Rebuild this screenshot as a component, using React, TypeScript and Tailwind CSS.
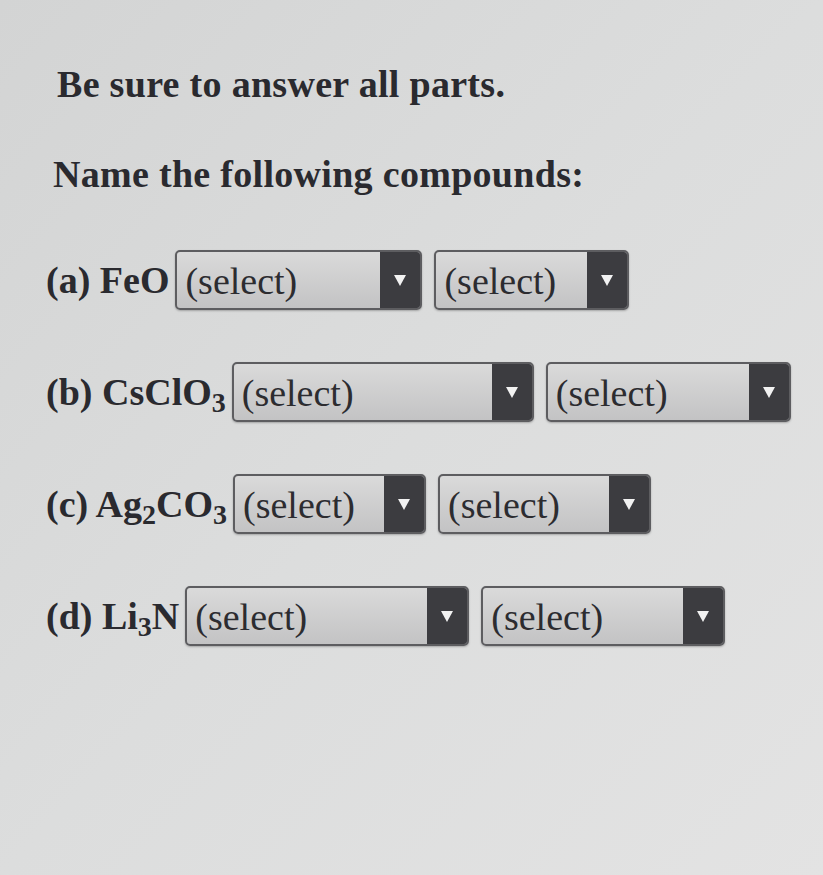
type Part = {
  letter: string;
  formula: React.ReactNode;
  first: number;
  second: number;
};

const parts: Part[] = [
  { letter: "a", formula: <>FeO</>, first: 247, second: 195 },
  {
    letter: "b",
    formula: (
      <>
        CsClO<Sub>3</Sub>
      </>
    ),
    first: 302,
    second: 245,
  },
  {
    letter: "c",
    formula: (
      <>
        Ag<Sub>2</Sub>CO<Sub>3</Sub>
      </>
    ),
    first: 193,
    second: 213,
  },
  {
    letter: "d",
    formula: (
      <>
        Li<Sub>3</Sub>N
      </>
    ),
    first: 284,
    second: 244,
  },
];

export default function App() {
  return (
    <main className="min-h-[875px] w-[823px] bg-gradient-to-br from-[#d3d4d4] via-[#dcdddd] to-[#e3e3e3] pl-[46px] pt-[60px] font-['Liberation_Serif',serif] text-[#2a2a2f]">
      <p className="pl-[11px] text-[38px] font-bold leading-[48px] tracking-[0.3px]">
        Be sure to answer all parts.
      </p>
      <p className="mt-[42px] pl-[7px] text-[38px] font-bold leading-[48px] tracking-[0.3px]">
        Name the following compounds:
      </p>

      <div className="mt-[52px] flex flex-col gap-[52px]">
        {parts.map((part) => (
          <div key={part.letter} className="flex items-center">
            <span className="whitespace-nowrap text-[38px] font-bold leading-none">
              ({part.letter}) {part.formula}
            </span>
            <Select width={part.first} className="ml-[6px]" />
            <Select width={part.second} className="ml-[12px]" />
          </div>
        ))}
      </div>
    </main>
  );
}

function Sub({ children }: { children: React.ReactNode }) {
  return <sub className="text-[28px] leading-none">{children}</sub>;
}

function Select({ width, className }: { width: number; className?: string }) {
  return (
    <div
      style={{ width }}
      className={[
        "flex h-[60px] items-stretch overflow-hidden rounded-[5px] border-2 border-[#5d5d60] bg-gradient-to-b from-[#dadada] to-[#c3c3c4] shadow-[0_1px_2px_rgba(0,0,0,0.25)]",
        className ?? "",
      ].join(" ")}
    >
      <span className="flex flex-1 items-center pl-[8px] pt-[2px] text-[38px] leading-none text-[#2c2c30]">
        (select)
      </span>
      <span className="flex w-[40px] items-center justify-center bg-[#3c3c40]">
        <svg width="14" height="14" viewBox="0 0 14 14">
          <path d="M1 2 H13 L7 13 Z" fill="#f2f2f2" />
        </svg>
      </span>
    </div>
  );
}
